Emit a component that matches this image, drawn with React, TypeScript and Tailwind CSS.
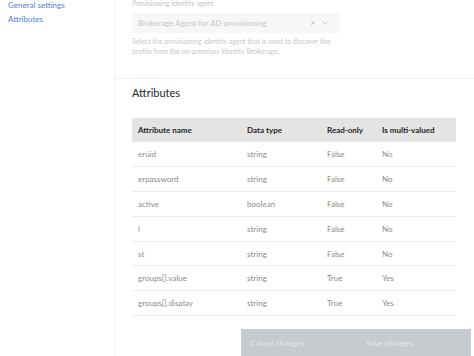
import React from 'react';

const rows = [
  ['eruid', 'string', 'False', 'No'],
  ['erpassword', 'string', 'False', 'No'],
  ['active', 'boolean', 'False', 'No'],
  ['l', 'string', 'False', 'No'],
  ['st', 'string', 'False', 'No'],
  ['groups[].value', 'string', 'True', 'Yes'],
  ['groups[].display', 'string', 'True', 'Yes'],
];

export default function App() {
  return (
    <div className="flex h-[356px] w-[474px] overflow-hidden bg-white font-['Lato','Liberation_Sans',sans-serif]">
      {/* Side nav */}
      <nav className="flex w-[115px] shrink-0 flex-col gap-[4px] border-r border-[#f4f4f4] pl-[8px] text-[8px] text-[#4b7fe6]">
        <span className="leading-[10px]">General settings</span>
        <span className="leading-[10px]">Attributes</span>
      </nav>

      {/* Main */}
      <main className="flex w-[359px] shrink-0 flex-col">
        <section className="border-b border-[#f0f0f0] pb-[22px] pl-[17px]">
          <div className="mt-[-2px] text-[7px] leading-[10px] text-[#c4c4c4]">Provisioning identity agent</div>
          <div className="mt-[5px] flex h-[20px] w-[208px] items-center justify-between bg-[#f7f7f8] pl-[6px] pr-[12px] text-[8px] text-[#c6c6c6]">
            <span>Brokerage Agent for AD provisioning</span>
            <span className="flex items-center gap-[6px] text-[#bdbdbd]">
              <svg width="6" height="6" viewBox="0 0 6 6" fill="none" stroke="currentColor" strokeWidth="0.8">
                <path d="M1 1l4 4M5 1L1 5" />
              </svg>
              <svg width="6" height="4" viewBox="0 0 6 4" fill="none" stroke="currentColor" strokeWidth="0.8">
                <path d="M0.5 0.8L3 3.2l2.5-2.4" />
              </svg>
            </span>
          </div>
          <p className="mt-[3px] w-[200px] text-[7px] leading-[10px] text-[#c8c8c8]">
            Select the provisioning identity agent that is used to discover the profile from the on-premises Identity Brokerage.
          </p>
        </section>

        <section className="pl-[17px]">
          <h2 className="mt-[7px] text-[11px] leading-[14px] text-[#262626]">Attributes</h2>
          <table className="mt-[18px] w-[324px] table-fixed border-collapse text-left text-[8px]">
            <thead>
              <tr className="h-[24px] bg-[#e4e4e4] text-[#262626]">
                <th className="w-[115px] pl-[6px] font-bold">Attribute name</th>
                <th className="w-[80px] font-bold">Data type</th>
                <th className="w-[55px] font-bold">Read-only</th>
                <th className="font-bold">Is multi-valued</th>
              </tr>
            </thead>
            <tbody className="text-[#8a8a8a]">
              {rows.map((r) => (
                <tr key={r[0]} className="h-[24.8px] border-b border-[#ececec]">
                  <td className="pl-[6px]">{r[0]}</td>
                  <td>{r[1]}</td>
                  <td>{r[2]}</td>
                  <td>{r[3]}</td>
                </tr>
              ))}
            </tbody>
          </table>
        </section>

        <div className="mt-auto flex pl-[126px] pr-[3px]">
          <div className="flex h-[27px] flex-1 items-center bg-[#c7cacf] text-[8px] text-[#e6e8eb]">
            <span className="w-[125px] pl-[9px]">Cancel changes</span>
            <span>Save changes</span>
          </div>
        </div>
      </main>
    </div>
  );
}
